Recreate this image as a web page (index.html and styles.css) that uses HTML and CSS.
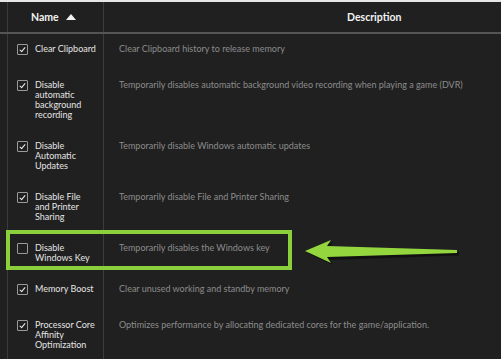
FILE: index.html
```html
<!DOCTYPE html>
<html lang="en">
<head>
  <meta charset="UTF-8">
  <title>Optimizations</title>
  <link rel="stylesheet" href="styles.css">
</head>
<body>
  <div class="panel">
    <div class="table">
      <div class="head-row">
        <div class="head-name">Name <span class="sort"></span></div>
        <div class="head-desc">Description</div>
      </div>

      <div class="row">
        <div class="name"><span class="box checked"></span><span class="label">Clear Clipboard</span></div>
        <div class="desc">Clear Clipboard history to release memory</div>
      </div>
      <div class="row">
        <div class="name"><span class="box checked"></span><span class="label">Disable automatic background recording</span></div>
        <div class="desc">Temporarily disables automatic background video recording when playing a game (DVR)</div>
      </div>
      <div class="row">
        <div class="name"><span class="box checked"></span><span class="label">Disable Automatic Updates</span></div>
        <div class="desc">Temporarily disable Windows automatic updates</div>
      </div>
      <div class="row">
        <div class="name"><span class="box checked"></span><span class="label">Disable File and Printer Sharing</span></div>
        <div class="desc">Temporarily disable File and Printer Sharing</div>
      </div>
      <div class="row highlight">
        <div class="name"><span class="box"></span><span class="label">Disable Windows Key</span></div>
        <div class="desc">Temporarily disables the Windows key</div>
      </div>
      <div class="row">
        <div class="name"><span class="box checked"></span><span class="label">Memory Boost</span></div>
        <div class="desc">Clear unused working and standby memory</div>
      </div>
      <div class="row">
        <div class="name"><span class="box checked"></span><span class="label">Processor Core Affinity Optimization</span></div>
        <div class="desc">Optimizes performance by allocating dedicated cores for the game/application.</div>
      </div>
    </div>

    <svg class="arrow" width="170" height="40" viewBox="0 0 170 40">
      <polygon class="arrow-shadow" points="2,14 28,3 24,10 154,13 154,16.5 24,21 28,26" />
      <polygon class="arrow-fill" points="0,12 26,1 22,7 152,11 152,14 22,18 26,24" />
    </svg>
  </div>
</body>
</html>
```

FILE: styles.css
```css
body {
  margin: 0;
  background: #202020;
  font-family: 'Lato', sans-serif;
}

.panel {
  position: relative;
  height: 357px;
  border-top: 2px solid #e6e6e6;
  overflow: hidden;
}

.table {
  margin-left: 7px;
  border-left: 1px solid #3a3a3a;
  min-height: 357px;
}

.head-row {
  display: grid;
  grid-template-columns: 96px 1fr;
  height: 30px;
  border-bottom: 2px solid #555;
  margin-left: -8px;
  padding-left: 8px;
  color: #f2f2f2;
  font-weight: bold;
  font-size: 10.5px;
}

.head-name {
  display: flex;
  align-items: center;
  padding-left: 23px;
  border-right: 1px solid #3c3c3c;
}

.sort {
  width: 0;
  height: 0;
  margin-left: 7px;
  border-left: 5px solid transparent;
  border-right: 5px solid transparent;
  border-bottom: 6px solid #f2f2f2;
}

.head-desc {
  display: flex;
  align-items: center;
  padding-left: 243px;
}

.row {
  display: grid;
  grid-template-columns: 96px 1fr;
  min-height: 36px;
  box-sizing: border-box;
}

.name {
  display: flex;
  align-items: flex-start;
  padding: 10px 0 11px 9px;
  border-right: 1px solid #3c3c3c;
}

.label {
  width: 62px;
  margin-left: 7px;
  color: #e4e4e4;
  font-size: 9px;
  line-height: 10px;
}

.box {
  flex: none;
  width: 9px;
  height: 9px;
  border: 1px solid #9a9a9a;
  border-radius: 1px;
  position: relative;
}

.box.checked::after {
  content: "";
  position: absolute;
  left: 3px;
  top: 1px;
  width: 2px;
  height: 5px;
  border: solid #f0f0f0;
  border-width: 0 1.5px 1.5px 0;
  transform: rotate(40deg);
}

.desc {
  padding: 10px 0 0 15px;
  color: #8c8c8c;
  font-size: 9px;
  line-height: 10px;
  white-space: nowrap;
}

.highlight {
  position: relative;
}

.highlight::before {
  content: "";
  position: absolute;
  left: -2px;
  top: -3px;
  width: 286px;
  height: 40px;
  border: 4px solid #8bcf3c;
  box-sizing: border-box;
}

.arrow {
  position: absolute;
  left: 305px;
  top: 237px;
}

.arrow-shadow {
  fill: rgba(0, 0, 0, 0.45);
}

.arrow-fill {
  fill: #93d63e;
}
```
